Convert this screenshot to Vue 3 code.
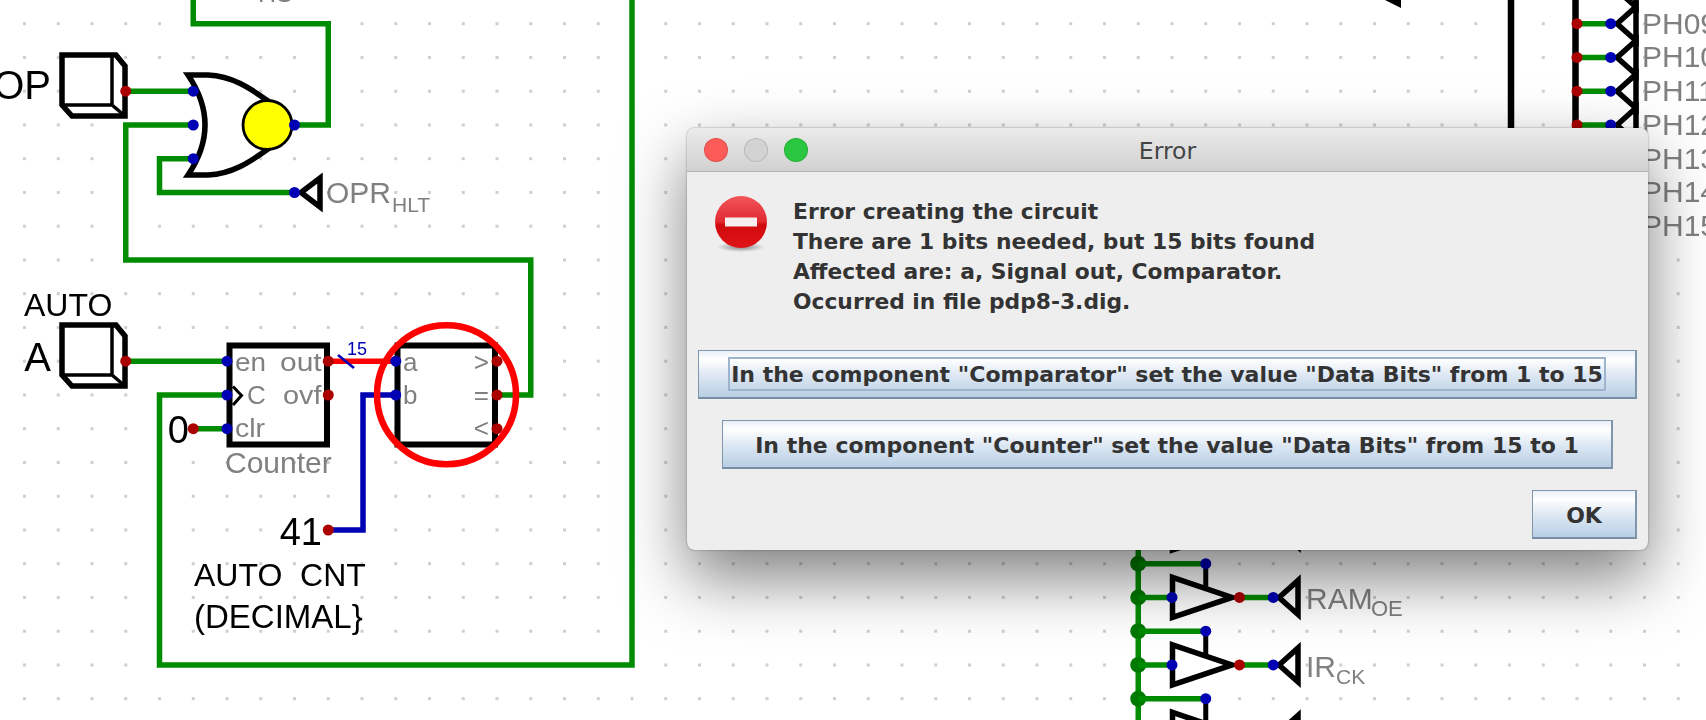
<script setup>
// grid of the circuit editor
const G = 33.75;
const cx = (c) => 24.5 + G * c;
const cy = (r) => 23.7 + G * r;

const colDots = Array.from({ length: 51 }, (_, i) => i);

const greenWires = [
  "M193.25 0V23.7H328.25V125H294.5",
  "M125.75 91.2H193.25",
  "M193.25 125H125.75V259.9H530.75V395H497",
  "M193.25 158.7H159.5V192.5H294.5",
  "M125.75 361.2H227",
  "M227 395H159.5V665H632V0",
  "M193.25 428.7H227",
];

const redPins = [
  [125.75, 91.2],
  [125.75, 361.2],
  [193.25, 428.7],
  [328.25, 361.2],
  [328.25, 395],
  [328.25, 530],
  [497, 361.2],
  [497, 395],
  [497, 428.7],
];
const bluePins = [
  [193.25, 91.2],
  [193.25, 125],
  [193.25, 158.7],
  [294.5, 125],
  [294.5, 192.5],
  [227, 361.2],
  [227, 395],
  [227, 428.7],
  [395.75, 361.2],
  [395.75, 395],
];

const phases = ["PH09", "PH10", "PH11", "PH12", "PH13", "PH14", "PH15"];
const phaseRows = [-1, 0, 1, 2, 3, 4, 5, 6];

const buffers = [
  { row: 15, name: "", sub: "" },
  { row: 17, name: "RAM", sub: "OE" },
  { row: 19, name: "IR", sub: "CK" },
  { row: 21, name: "", sub: "" },
];
const busRows = [15, 16, 17, 18, 19, 20];

const message = [
  "Error creating the circuit",
  "There are 1 bits needed, but 15 bits found",
  "Affected are: a, Signal out, Comparator.",
  "Occurred in file pdp8-3.dig.",
];
</script>

<template>
  <div class="screen">
    <svg class="circuit" width="1706" height="720" viewBox="0 0 1706 720">
      <g fill="#cfcfcf">
        <template v-for="c in colDots" :key="c">
          <rect v-for="r in 21" :key="r" :x="cx(c) - 1.5" :y="cy(r - 1) - 1.5" width="3" height="3" />
        </template>
      </g>

      <!-- left part -->
      <g fill="none" stroke="#008c00" stroke-width="5.5">
        <path v-for="d in greenWires" :key="d" :d="d" />
      </g>
      <path d="M328.25 361.2H395.75" fill="none" stroke="#ff0000" stroke-width="5.5" />
      <path d="M395.75 395H363V530H328.25" fill="none" stroke="#0000b4" stroke-width="5.5" />
      <path d="M338 355L354 368" stroke="#0000b4" stroke-width="2.5" />
      <text x="347" y="355" class="t" font-size="18" fill="#0000b4">15</text>
      <text x="258" y="2" class="t" font-size="25" fill="#808080">HS</text>

      <g v-for="dy in [0, 270]" :key="dy" :transform="`translate(0 ${dy})`" fill="none" stroke="#000">
        <path d="M62 55H116L125 66V116H72L62 105Z" fill="#fff" stroke-width="5.5" />
        <path d="M62 105H112V55M112 105L125 116" stroke-width="3.5" />
      </g>

      <!-- nor gate -->
      <path
        d="M188 75H208C232 76 250 88 268 101C250 114 250 136 268 149C250 162 232 174 208 175H188Q222 125 188 75Z"
        fill="#fff"
        stroke="#000"
        stroke-width="5.5"
      />
      <circle cx="267.5" cy="125" r="24.5" fill="#ffff00" stroke="#000" stroke-width="2.8" />

      <!-- counter and comparator -->
      <rect x="229.5" y="345.5" width="97.5" height="99" fill="#fff" stroke="#000" stroke-width="6" />
      <rect x="397.5" y="345.5" width="97.5" height="99" fill="#fff" stroke="#000" stroke-width="6" />
      <path d="M233 386.5L241.5 395.5L233 405" fill="none" stroke="#000" stroke-width="3" />

      <g class="t" fill="#808080" font-size="26">
        <text x="235" y="371" textLength="31" lengthAdjust="spacingAndGlyphs">en</text>
        <text x="280" y="371" textLength="41.7" lengthAdjust="spacingAndGlyphs">out</text>
        <text x="247" y="404">C</text>
        <text x="283" y="404" textLength="38.5" lengthAdjust="spacingAndGlyphs">ovf</text>
        <text x="235" y="437" textLength="30" lengthAdjust="spacingAndGlyphs">clr</text>
        <text x="225" y="473" font-size="30">Counter</text>
        <text x="403" y="371">a</text>
        <text x="403" y="404">b</text>
        <text x="489" y="371" text-anchor="end">&gt;</text>
        <text x="489" y="404" text-anchor="end">=</text>
        <text x="489" y="437" text-anchor="end">&lt;</text>
      </g>

      <path d="M301 192.5L320 178V207Z" fill="#fff" stroke="#000" stroke-width="5.5" />
      <g class="t" fill="#808080">
        <text x="326" y="203" font-size="30">OPR</text>
        <text x="392" y="212" font-size="21">HLT</text>
      </g>

      <g class="t" fill="#000">
        <text x="51" y="98.5" font-size="40" text-anchor="end">OP</text>
        <text x="51" y="371" font-size="40" text-anchor="end">A</text>
        <text x="24" y="316" font-size="32">AUTO</text>
        <text x="322" y="545" font-size="38" text-anchor="end">41</text>
        <text x="189" y="443" font-size="38" text-anchor="end">0</text>
        <text x="194" y="586" font-size="32">AUTO&nbsp; CNT</text>
        <text x="194" y="628" font-size="33">(DECIMAL}</text>
      </g>

      <g fill="#aa0000">
        <circle v-for="p in redPins" :key="p.join()" :cx="p[0]" :cy="p[1]" r="5.5" />
      </g>
      <g fill="#0000b4">
        <circle v-for="p in bluePins" :key="p.join()" :cx="p[0]" :cy="p[1]" r="5.5" />
      </g>

      <circle cx="446.5" cy="394.7" r="69.5" fill="none" stroke="#ff0000" stroke-width="6.5" />

      <!-- top middle: tail of a gate above the view -->
      <path d="M1385 0L1401 8V0Z" fill="#000" />

      <!-- top right phase outputs -->
      <path d="M1511 0V130M1575.5 0V130" fill="none" stroke="#000" stroke-width="6.5" />
      <g v-for="r in phaseRows" :key="r">
        <path v-if="r >= 0" :d="`M1577 ${cy(r)}H1610.75`" fill="none" stroke="#008c00" stroke-width="5.5" />
        <path :d="`M1617 ${cy(r)}L1636 ${cy(r) - 17}V${cy(r) + 17}Z`" fill="#fff" stroke="#000" stroke-width="5.5" />
        <circle v-if="r >= 0" cx="1577" :cy="cy(r)" r="5.5" fill="#aa0000" />
        <circle v-if="r >= 0" cx="1610.75" :cy="cy(r)" r="5.5" fill="#0000b4" />
      </g>
      <text v-for="(p, i) in phases" :key="p" x="1642" :y="33.5 + G * i" class="t" font-size="30" fill="#808080">{{ p }}</text>

      <!-- bottom right buffers -->
      <path d="M1138.25 530V720" fill="none" stroke="#008c00" stroke-width="5.5" />
      <g v-for="r in busRows" :key="r">
        <circle cx="1138.25" :cy="cy(r)" r="8" fill="#007a00" />
      </g>
      <g v-for="b in buffers" :key="b.row">
        <path :d="`M1138.25 ${cy(b.row - 1)}H1205.75`" fill="none" stroke="#008c00" stroke-width="5.5" />
        <path :d="`M1205.75 ${cy(b.row - 1)}V${cy(b.row) - 10}`" fill="none" stroke="#000" stroke-width="5" />
        <path :d="`M1138.25 ${cy(b.row)}H1172M1239.5 ${cy(b.row)}H1273.25`" fill="none" stroke="#008c00" stroke-width="5.5" />
        <path :d="`M1172.5 ${cy(b.row) - 20}L1232 ${cy(b.row)}L1172.5 ${cy(b.row) + 20}Z`" fill="#fff" stroke="#000" stroke-width="5.5" />
        <path :d="`M1279 ${cy(b.row)}L1298 ${cy(b.row) - 17}V${cy(b.row) + 17}Z`" fill="#fff" stroke="#000" stroke-width="5.5" />
        <circle cx="1205.75" :cy="cy(b.row - 1)" r="5.5" fill="#0000b4" />
        <circle cx="1172" :cy="cy(b.row)" r="5.5" fill="#0000b4" />
        <circle cx="1239.5" :cy="cy(b.row)" r="5.5" fill="#aa0000" />
        <circle cx="1273.25" :cy="cy(b.row)" r="5.5" fill="#0000b4" />
      </g>
      <g class="t" fill="#808080">
        <text x="1306" :y="cy(17) + 12" font-size="30">RAM</text>
        <text x="1371" :y="cy(17) + 19" font-size="22">OE</text>
        <text x="1306" :y="cy(19) + 12" font-size="30">IR</text>
        <text x="1336" :y="cy(19) + 19" font-size="21">CK</text>
      </g>
    </svg>

    <div class="dialog">
      <div class="titlebar">
        <div class="lights">
          <span class="light close"></span>
          <span class="light min"></span>
          <span class="light zoom"></span>
        </div>
        <div class="title">Error</div>
      </div>

      <div class="body">
        <div class="msg">
          <svg class="stop" width="56" height="60" viewBox="0 0 56 60">
            <defs>
              <linearGradient id="stopFill" x1="0" y1="0" x2="0" y2="1">
                <stop offset="0" stop-color="#f2555a" />
                <stop offset="0.5" stop-color="#e02a30" />
                <stop offset="0.55" stop-color="#cf0a0e" />
                <stop offset="1" stop-color="#e01416" />
              </linearGradient>
              <radialGradient id="stopShadow">
                <stop offset="0" stop-color="#000" stop-opacity="0.45" />
                <stop offset="1" stop-color="#000" stop-opacity="0" />
              </radialGradient>
            </defs>
            <ellipse cx="28" cy="52" rx="24" ry="5" fill="url(#stopShadow)" />
            <circle cx="28" cy="27" r="26" fill="url(#stopFill)" />
            <rect x="12" y="22.5" width="32" height="9" fill="#f6eeee" />
          </svg>
          <div class="lines">
            <div v-for="line in message" :key="line">{{ line }}</div>
          </div>
        </div>

        <div class="choices">
          <button class="btn first">
            <span class="focus">In the component "Comparator" set the value "Data Bits" from 1 to 15</span>
          </button>
          <button class="btn">In the component "Counter" set the value "Data Bits" from 15 to 1</button>
        </div>

        <div class="actions">
          <button class="btn ok">OK</button>
        </div>
      </div>
    </div>
  </div>
</template>

<style scoped>
.screen {
  position: relative;
  width: 1706px;
  height: 720px;
  overflow: hidden;
  background: #fff;
}

.circuit {
  display: block;
  filter: blur(0.5px);
}

.t {
  font-family: "Liberation Sans", Arial, sans-serif;
}

.dialog {
  position: absolute;
  left: 687px;
  top: 128px;
  width: 961px;
  height: 422px;
  box-sizing: border-box;
  display: flex;
  flex-direction: column;
  background: #eeeeee;
  border-radius: 8px;
  box-shadow: 0 0 2px rgba(0, 0, 0, 0.45), 0 28px 65px rgba(0, 0, 0, 0.5);
  font-family: "DejaVu Sans", sans-serif;
  color: #333;
  overflow: hidden;
}

.titlebar {
  position: relative;
  height: 44px;
  flex: none;
  display: flex;
  align-items: center;
  justify-content: center;
  padding-top: 2px;
  background: linear-gradient(#ebebeb, #d1d1d1);
  border-bottom: 1px solid #b1b1b1;
  box-sizing: border-box;
}

.lights {
  position: absolute;
  left: 17px;
  top: 10px;
  display: flex;
  gap: 16px;
}

.light {
  width: 24px;
  height: 24px;
  border-radius: 50%;
  box-sizing: border-box;
  border: 1px solid rgba(0, 0, 0, 0.12);
}

.close {
  background: #fc5b57;
}

.min {
  background: #d3d3d3;
}

.zoom {
  background: #2ac840;
}

.title {
  font-size: 23.5px;
  color: #444;
}

.body {
  flex: 1;
  display: flex;
  flex-direction: column;
  padding: 0 11px 11px;
}

.msg {
  display: flex;
  height: 178px;
  box-sizing: border-box;
  padding: 23px 0 0 15px;
}

.stop {
  flex: none;
}

.lines {
  margin-left: 24px;
  font-size: 21.8px;
  font-weight: bold;
  line-height: 30px;
  margin-top: 2px;
  white-space: nowrap;
}

.choices {
  display: flex;
  flex-direction: column;
  align-items: center;
  gap: 21px;
}

.btn {
  height: 49px;
  box-sizing: border-box;
  padding: 2px 32px 0;
  display: flex;
  align-items: center;
  justify-content: center;
  border: 1px solid #7f96ad;
  border-bottom: 2px solid #788ea6;
  border-right: 2px solid #7f96ad;
  background: linear-gradient(#e9eff8 0%, #ffffff 18%, #dbe6f2 55%, #b8cfe4 100%);
  font-family: "DejaVu Sans", sans-serif;
  font-size: 22px;
  font-weight: bold;
  color: #333;
  white-space: nowrap;
}

.first {
  padding: 0 29px;
}

.focus {
  display: block;
  padding: 0 1.5px;
  height: 34px;
  line-height: 31px;
  box-sizing: border-box;
  border: 2px solid #9db4cc;
}

.actions {
  margin-top: auto;
  display: flex;
  justify-content: flex-end;
}

.ok {
  width: 105px;
  padding: 2px 0 0;
}
</style>
